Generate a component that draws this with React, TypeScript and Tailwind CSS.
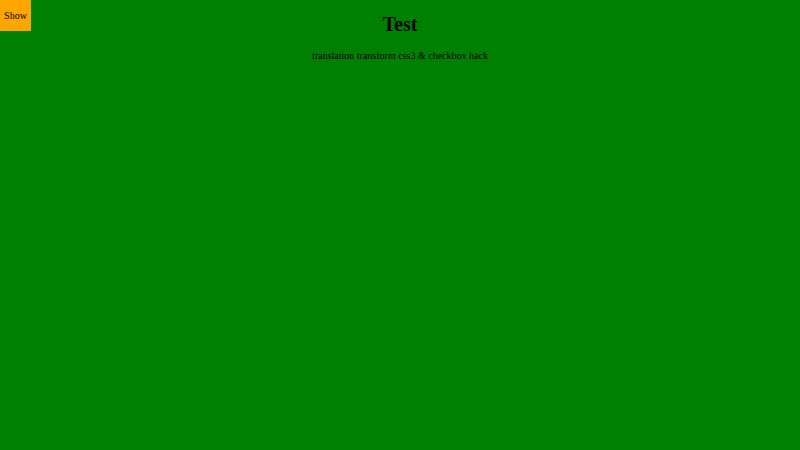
import React, { useState } from "react";

export default function App() {
    const [open, setOpen] = useState(false);

    return (
        <div className="relative min-h-[450px] w-full bg-[#008000] font-['Liberation_Serif',serif] text-[10px] text-black">
            {/* toggle */}
            <button
                onClick={() => setOpen(!open)}
                className="absolute left-0 top-0 flex h-[31px] w-[31px] items-center justify-center bg-[#ffa500] text-[10px] leading-none"
            >
                {open ? "Hide" : "Show"}
            </button>

            <div className="pt-[13px] text-center">
                <h1 className="text-[20px] font-bold leading-[23px]">Test</h1>
                <p className="mt-[14px] leading-[12px]">translation transform css3 &amp; checkbox hack</p>
            </div>
        </div>
    );
}
